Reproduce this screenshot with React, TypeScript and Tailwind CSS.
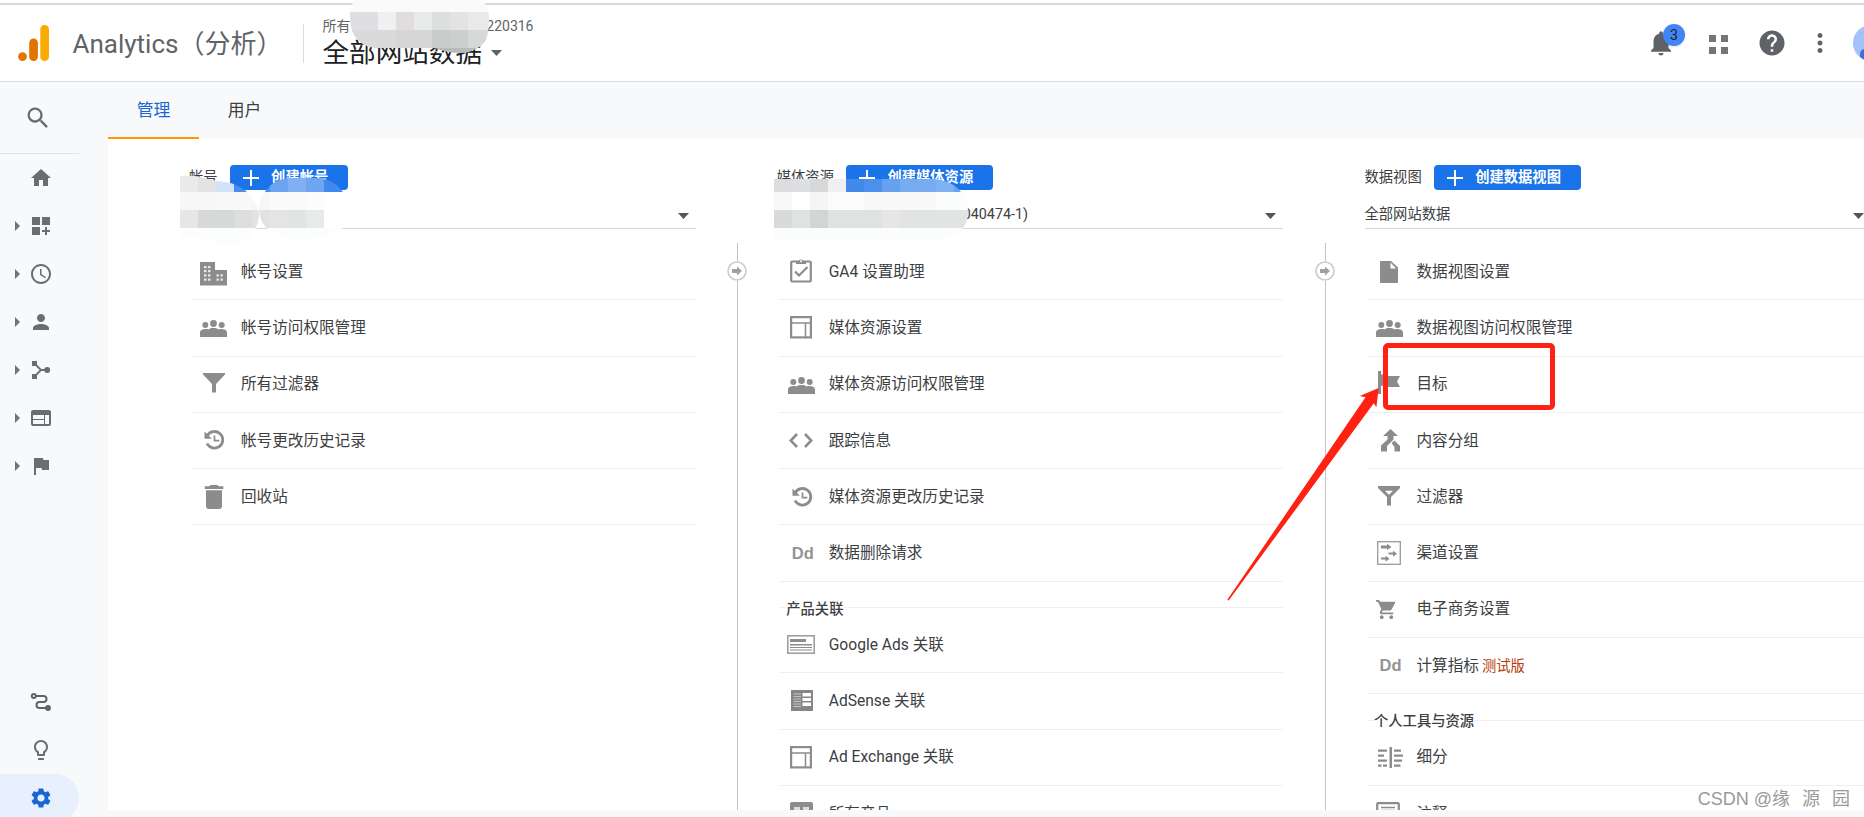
import type { ReactNode } from 'react'
import {
  MdDashboardCustomize,
  MdDelete,
  MdFlag,
  MdHelp,
  MdHome,
  MdLightbulbOutline,
  MdMoreVert,
  MdNotifications,
  MdOutlineAccessTime,
  MdPerson,
  MdSearch,
  MdSettings,
  MdShoppingCart,
  MdWeb,
} from 'react-icons/md'

type Item = { icon: ReactNode; label: string; beta?: string }
type Group = { title?: string; items: Item[] }

/* ---------- list icons ---------- */

const BuildingIcon = () => (
  <svg width="27" height="24" viewBox="0 0 27 24" className="translate-y-[2px]">
    <path fill="#8c8c8c" d="M0 0h15v8h12v15.5H0z" />
    <g fill="#e8e8e8">
      <path d="M4 4h2.5v2.3H4zM8 4h2.5v2.3H8zM4 8h2.5v2.3H4zM8 8h2.5v2.3H8zM4 12.200h2.500v2.300H4zM8 12.200h2.500v2.300H8zM4 16.500h2.500v2.300H4zM8 16.500h2.500v2.300H8z" />
      <path d="M16.500 12.200h2.300v2.300h-2.300zM20.500 12.200h2.300v2.300h-2.300zM16.500 16.500h2.300v2.300h-2.300zM20.500 16.500h2.300v2.300h-2.300z" />
    </g>
  </svg>
)

const PeopleIcon = () => (
  <svg width="27" height="17" viewBox="0 0 27 17" fill="#8c8c8c" className="translate-y-[1px]">
    <circle cx="5.300" cy="5" r="3" />
    <circle cx="13.500" cy="3.500" r="3.400" />
    <circle cx="21.700" cy="5" r="3" />
    <path d="M0 17v-4.500C0 10 3 9 6 9c1 0 1.800.2 2.500.4C9.700 8.500 11.500 8 13.500 8s3.800.5 5 1.400c.7-.2 1.500-.4 2.500-.4 3 0 6 1 6 3.500V17z" />
  </svg>
)

const FilterIcon = () => (
  <svg width="22" height="20" viewBox="0 0 22 20" fill="#8c8c8c" className="-translate-y-px">
    <path d="M0 0h22v1.500L13 11v8.500H9V11L0 1.500z" />
  </svg>
)

const FilterOutlineIcon = () => (
  <svg width="22" height="20" viewBox="0 0 22 20" fill="#8c8c8c" className="-translate-y-px">
    <path fillRule="evenodd" d="M0 0h22v2l-9 9v8.500H9V11L0 2zM7 4.800l4 4 4-4z" />
  </svg>
)

const HistoryIcon = () => (
  <svg width="21" height="20" viewBox="0 0 21 20" fill="none" stroke="#8c8c8c" className="translate-x-px">
    <path strokeWidth="2.800" d="M3.200 5.800A8.300 8.300 0 1 1 3 13.500" />
    <path fill="#8c8c8c" stroke="none" d="M.5 1.500v7.300h7.300z" />
    <path strokeWidth="1.700" d="M10.500 5.500v5.200h4.800" />
  </svg>
)

const TrashIcon = () => <MdDelete size={32} color="#8c8c8c" />

const ClipboardIcon = () => (
  <svg width="22" height="25" viewBox="0 0 22 25" fill="none" stroke="#8c8c8c" className="-translate-y-px">
    <rect x="1.200" y="3.500" width="19.600" height="20" rx="1" strokeWidth="2.200" />
    <path strokeWidth="2.200" d="m5 13.500 4 4 8.500-8.500" />
    <path fill="#8c8c8c" stroke="none" d="M6 3.500h2.300a2.800 2.800 0 0 1 5.400 0H16V6H6z" />
    <circle cx="11" cy="3.200" r="1" fill="#fff" stroke="none" />
  </svg>
)

const LayoutIcon = () => (
  <svg width="22" height="23" viewBox="0 0 22 23" fill="none" stroke="#8c8c8c">
    <rect x="1.100" y="1.100" width="19.800" height="20.300" strokeWidth="2.200" />
    <path strokeWidth="1.500" d="M2 7h18M15.500 7v14" />
  </svg>
)

const CodeIcon = () => (
  <svg width="24" height="15" viewBox="0 0 24 15" fill="none" stroke="#8c8c8c" strokeWidth="2.600">
    <path d="M8 1 1.700 7.500 8 14M16 1l6.300 6.500L16 14" />
  </svg>
)

const DdIcon = () => (
  <span className="pl-[3px] font-['Liberation_Sans',sans-serif] text-[16.5px] font-bold text-[#949494]">Dd</span>
)

const AdsIcon = () => (
  <svg width="28" height="19" viewBox="0 0 28 19">
    <rect x=".8" y=".8" width="26.400" height="17.400" fill="none" stroke="#9a9a9a" strokeWidth="1.500" />
    <path fill="#8c8c8c" d="M3 4h16v3H3zM3 9h22v1.500H3zM3 12h22v1H3zM3 14.500h22v1H3z" />
  </svg>
)

const AdSenseIcon = () => (
  <svg width="22" height="21" viewBox="0 0 22 21" className="translate-x-px">
    <path fill="#868686" d="M0 0h22v21H0z" />
    <path fill="#fff" d="M11.500 3H20v3.500h-8.500zM11.500 8H20v3h-8.500zM11.500 12.500H20V16h-8.500z" />
    <path fill="#c4c4c4" d="M2.500 3.500H10v1H2.500zM2.500 6H10v1H2.500zM2.500 8.500H10v1H2.500zM2.500 11H10v1H2.500zM2.500 13.500H10v1H2.500zM2.500 16H10v1H2.500z" />
  </svg>
)

const ProductsIcon = () => (
  <svg width="23" height="22" viewBox="0 0 23 22">
    <rect width="23" height="22" rx="2" fill="#8c8c8c" />
    <path fill="#ddd" d="M4 5h6v5H4zM13 5h6v5h-6z" />
  </svg>
)

const FileIcon = () => (
  <svg width="18" height="22" viewBox="0 0 18 22" fill="#8c8c8c">
    <path fillRule="evenodd" d="M0 1a1 1 0 0 1 1-1h10l7 6.500V21a1 1 0 0 1-1 1H1a1 1 0 0 1-1-1zM10.500 1.500V7.500H16z" />
  </svg>
)

const GoalIcon = () => (
  <svg width="22" height="23" viewBox="0 0 22 23" fill="#8c8c8c" className="-translate-y-0.5">
    <path d="M0 0h3v3.500C6 3 9 5 12 5h10l-3 5.500 3 5.500H12c-3 0-6-2-9-1v8H0z" />
  </svg>
)

const MergeIcon = () => (
  <svg width="19" height="23" viewBox="0 0 19 23" fill="#8c8c8c" className="translate-x-px">
    <path d="M9.500 0 17 7h-4.500v3.500L6 17v5.500H0V16.500l6.500-6V7H2z" />
    <path d="m10.500 14 3-2.500L19 17v5.500h-5.500V18z" />
  </svg>
)

const ChannelIcon = () => (
  <svg width="24" height="24" viewBox="0 0 24 24" fill="#8c8c8c">
    <rect x=".7" y=".7" width="22.600" height="22.600" fill="none" stroke="#9a9a9a" strokeWidth="1.300" />
    <path d="M4 4.500h6V2.800L14.500 6 10 9V7.500H4zM11.500 11.500H16v-1.800l4 3-4 3V13.500h-4.500zM4 16.500h4.500v-1.800l4 3-4 3V18.500H4z" />
  </svg>
)

const CartIcon = () => <MdShoppingCart size={23} color="#8c8c8c" className="-translate-x-[3px]" />

const SegmentIcon = () => (
  <svg width="25" height="21" viewBox="0 0 25 21" fill="#8c8c8c" className="translate-x-px">
    <path d="M11.500 0H14v21h-2.500zM0 2.500h9v2.300H0zM0 7.500h6v2.300H0zM0 12.500h9v2.300H0zM0 17.500h3.500v2.300H0zM5 17.500h4v2.300H5zM16 2.500h7v2.300h-7zM16 7.500h9v2.300h-9zM16 12.500h8v2.300h-8zM16 17.500h6.500v2.300H16z" />
  </svg>
)

const NoteIcon = () => (
  <svg width="24" height="22" viewBox="0 0 24 22" fill="none" stroke="#8c8c8c" className="-translate-x-px">
    <rect x="1.200" y="1.200" width="21.600" height="19.600" rx="1" strokeWidth="2.200" />
    <path strokeWidth="1.500" d="M5 5.500h14M5 8.500h14" />
  </svg>
)

/* ---------- sidebar icons ---------- */

const BranchIcon = () => (
  <svg width="24" height="24" viewBox="0 0 24 24" fill="currentColor">
    <path d="M3 3h5v5H3zM3 16h5v5H3z" />
    <circle cx="18.200" cy="12" r="3" />
    <path fill="none" stroke="currentColor" strokeWidth="1.800" d="m6 6 6 6-6 6M12 12h5" />
  </svg>
)

const RouteIcon = () => (
  <svg width="24" height="24" viewBox="0 0 24 24" fill="none" stroke="currentColor" strokeWidth="2">
    <circle cx="4.800" cy="6" r="2" />
    <path d="M7 6h7.500a3 3 0 0 1 0 6h-4a3 3 0 0 0 0 6H17" />
    <circle cx="19" cy="18" r="2.900" fill="currentColor" stroke="none" />
  </svg>
)

const navItems = [
  { icon: <MdHome size={24} />, expandable: false },
  { icon: <MdDashboardCustomize size={24} />, expandable: true },
  { icon: <MdOutlineAccessTime size={24} />, expandable: true },
  { icon: <MdPerson size={24} />, expandable: true },
  { icon: <BranchIcon />, expandable: true },
  { icon: <MdWeb size={24} />, expandable: true },
  { icon: <MdFlag size={24} />, expandable: true },
]

const accountGroups: Group[] = [
  {
    items: [
      { icon: <BuildingIcon />, label: '帐号设置' },
      { icon: <PeopleIcon />, label: '帐号访问权限管理' },
      { icon: <FilterIcon />, label: '所有过滤器' },
      { icon: <HistoryIcon />, label: '帐号更改历史记录' },
      { icon: <TrashIcon />, label: '回收站' },
    ],
  },
]

const propertyGroups: Group[] = [
  {
    items: [
      { icon: <ClipboardIcon />, label: 'GA4 设置助理' },
      { icon: <LayoutIcon />, label: '媒体资源设置' },
      { icon: <PeopleIcon />, label: '媒体资源访问权限管理' },
      { icon: <CodeIcon />, label: '跟踪信息' },
      { icon: <HistoryIcon />, label: '媒体资源更改历史记录' },
      { icon: <DdIcon />, label: '数据删除请求' },
    ],
  },
  {
    title: '产品关联',
    items: [
      { icon: <AdsIcon />, label: 'Google Ads 关联' },
      { icon: <AdSenseIcon />, label: 'AdSense 关联' },
      { icon: <LayoutIcon />, label: 'Ad Exchange 关联' },
      { icon: <ProductsIcon />, label: '所有产品' },
    ],
  },
]

const viewGroups: Group[] = [
  {
    items: [
      { icon: <FileIcon />, label: '数据视图设置' },
      { icon: <PeopleIcon />, label: '数据视图访问权限管理' },
      { icon: <GoalIcon />, label: '目标' },
      { icon: <MergeIcon />, label: '内容分组' },
      { icon: <FilterOutlineIcon />, label: '过滤器' },
      { icon: <ChannelIcon />, label: '渠道设置' },
      { icon: <CartIcon />, label: '电子商务设置' },
      { icon: <DdIcon />, label: '计算指标', beta: '测试版' },
    ],
  },
  {
    title: '个人工具与资源',
    items: [
      { icon: <SegmentIcon />, label: '细分' },
      { icon: <NoteIcon />, label: '注释' },
    ],
  },
]

function Caret({ className = '' }: { className?: string }) {
  return (
    <svg width="11" height="6" viewBox="0 0 11 6" className={className}>
      <path fill="currentColor" d="M0 0h11L5.500 6z" />
    </svg>
  )
}

type ColumnProps = { label: string; action: string; selected: ReactNode; groups: Group[] }

function Column({ label, action, selected, groups }: ColumnProps) {
  return (
    <section className="w-[506.500px] shrink-0 pt-[26px]">
      <div className="flex h-[25px] items-center text-[14.3px]">
        <span className="whitespace-nowrap text-[#3c4043]">{label}</span>
        <button className="ml-[12.500px] flex h-[25px] items-center rounded bg-[#1a73e8] pr-5 pl-[13px] font-bold text-white">
          <svg width="16" height="16" viewBox="0 0 16 16" className="mr-3">
            <path stroke="#fff" strokeWidth="2" d="M8 0v16M0 8h16" />
          </svg>
          <span className="whitespace-nowrap">{action}</span>
        </button>
      </div>
      <div className="flex h-[39px] items-center justify-between border-b border-[#d5d7da] pr-[7px] pt-[12px] text-[14.3px] text-[#3c4043]">
        <span>{selected}</span>
        <Caret className="mt-px text-[#555]" />
      </div>

      <div className="mt-[15px] ml-[2.500px]">
        {groups.map((group, i) => (
          <div key={i}>
            {group.title && (
              <div className="flex h-[35.500px] items-center pt-[17px]">
                <div className="w-[7px] border-t border-[#f0f0f0]" />
                <h3 className="pt-0.5 text-[14.3px] font-medium leading-none text-[#3c4043]">{group.title}</h3>
                <div className="flex-1 border-t border-[#f0f0f0]" />
              </div>
            )}
            {group.items.map((item) => (
              <div key={item.label} className="flex h-[56.250px] items-center border-b border-[#efefef]">
                <div className="flex w-[44px] shrink-0 justify-center">{item.icon}</div>
                <span className="ml-[5.500px] whitespace-nowrap pt-[2px] text-[15.6px] text-[#3c4043]">{item.label}</span>
                {item.beta && <span className="ml-[3px] pt-[3px] text-[14.3px] text-[#b3400a]">{item.beta}</span>}
              </div>
            ))}
          </div>
        ))}
      </div>
    </section>
  )
}

function ColumnDivider() {
  return (
    <div className="flex w-[81.250px] shrink-0 flex-col items-center pt-[104px] pl-[3px]">
      <div className="h-[18px] w-px bg-[#c4c4c4]" />
      <svg width="20" height="20" viewBox="0 0 20 20" className="-ml-px shrink-0">
        <circle cx="10" cy="10" r="9" fill="#fff" stroke="#cbcbcb" strokeWidth="1.600" />
        <path fill="#a0a0a0" d="M5 8h5V5.500L15 10l-5 4.500V12H5z" />
      </svg>
      <div className="w-px flex-1 bg-[#c4c4c4]" />
    </div>
  )
}

/* Pixel mosaic covering account names */
function Mosaic() {
  const header = [
    [350, 12, 28, '#dfdfe1'], [378, 12, 18, '#f0f0f3'], [396, 12, 18, '#e1dddf'], [414, 12, 18, '#e9ebea'],
    [432, 12, 18, '#dddede'], [450, 12, 18, '#e3e3e3'], [468, 12, 21, '#ebe8e9'],
    [350, 30, 46, '#dadadb'], [396, 30, 36, '#d6d6d7'], [432, 30, 18, '#c9cbca'], [450, 30, 18, '#cdcfce'], [468, 30, 21, '#d7d8d8'],
    [396, 48, 93, '#b9babb'],
  ] as const
  const account = [
    [180, 174, 18, '#e9ebea'], [198, 174, 18, '#e2e3e2'], [216, 174, 18, '#d2e2fa'], [234, 174, 36, '#488dec'],
    [270, 174, 18, '#6ba3f1'], [288, 174, 18, '#80b0f2'], [306, 174, 18, '#6fa6f1'], [324, 174, 20, '#4289ec'],
    [180, 192, 36, '#f7f7f7'], [216, 192, 36, '#f9f9f9'], [252, 192, 18, '#f7f7f7'], [270, 192, 36, '#fafafa'], [306, 192, 18, '#fcfcfc'], [324, 192, 20, '#fefefe'],
    [180, 210, 18, '#e6e6e6'], [198, 210, 36, '#d7d9d8'], [234, 210, 18, '#dcdfde'], [252, 210, 18, '#e2e2e2'],
    [270, 210, 18, '#e4e4e4'], [288, 210, 18, '#e2e4e3'], [306, 210, 18, '#e8eae9'], [324, 210, 20, '#ffffff'],
    [180, 228, 164, '#fcfdfd'],
  ] as const
  const property = [
    [774, 174, 18, '#dcdcde'], [792, 174, 18, '#dedfe0'], [810, 174, 18, '#d8d8da'], [828, 174, 18, '#f0f0f0'],
    [846, 174, 18, '#4389ea'], [864, 174, 18, '#4a90ec'], [882, 174, 18, '#65a1ef'], [900, 174, 36, '#78acf1'], [936, 174, 18, '#80b2f3'], [954, 174, 18, '#6aa2ef'],
    [774, 192, 18, '#f8f8f8'], [792, 192, 18, '#fefefe'], [810, 192, 18, '#f4f6f5'], [828, 192, 36, '#fbfbfb'], [864, 192, 72, '#f9f9f9'], [936, 192, 36, '#fbfcfc'],
    [774, 210, 18, '#d9dadc'], [792, 210, 18, '#e0e2e1'], [810, 210, 18, '#d3d4d6'], [828, 210, 54, '#e0e2e1'], [882, 210, 18, '#e6e6e6'], [900, 210, 72, '#e2e4e3'],
    [774, 228, 198, '#fbfdfc'],
  ] as const

  const cells = (list: readonly (readonly [number, number, number, string])[]) =>
    list.map(([x, y, w, fill]) => <rect key={`${x}-${y}`} x={x} y={y} width={w} height="18" fill={fill} />)

  return (
    <>
      <clipPath id="mosaic-header">
        <path d="M355 0h127c4 5 7 10 7 18 0 10-1 17-4 24-6 6-14 11-24 11s-18-2-26-5h-60c-16-2-25-13-25-31 0-7 1-12 5-17z" />
      </clipPath>
      <clipPath id="mosaic-account">
        <path d="M180 176h14c8 1 15 3 22 5 20 1 30 8 37 18 4 6 6 11 6 17-2 14-10 30-31 30-10 0-20-7-30-9h-18z" />
        <path d="M259 209c2-17 13-31 33-31h26c12 1 20 7 25 14v36c-12 8-26 11-43 11-22 0-41-10-41-30z" />
      </clipPath>
      <clipPath id="mosaic-property">
        <path d="M774 179h160c22 2 34 16 34 33 0 16-12 27-30 28H774z" />
      </clipPath>
      <g clipPath="url(#mosaic-header)" shapeRendering="crispEdges">
        <path fill="#fafafa" d="M350 0h139v12H350z" />
        {cells(header)}
      </g>
      <g clipPath="url(#mosaic-account)" shapeRendering="crispEdges">{cells(account)}</g>
      <g clipPath="url(#mosaic-property)" shapeRendering="crispEdges">{cells(property)}</g>
    </>
  )
}

export default function App() {
  return (
    <div className="relative flex h-[817px] w-full flex-col overflow-hidden bg-[#f8f9fb] font-[Roboto,'Noto_Sans_CJK_SC',sans-serif] text-[#3c4043]">
      <div className="h-[5px] shrink-0 border-b-2 border-[#dadada] bg-white" />

      {/* top bar */}
      <header className="flex h-[77px] shrink-0 items-center border-b border-[#dadce0] bg-white">
        <svg width="31" height="36" viewBox="0 0 31 36" className="ml-[18px]">
          <rect x="22.300" width="8.700" height="36" rx="4.350" fill="#f9ab00" />
          <rect x="11.200" y="13.500" width="8.700" height="22.500" rx="4.350" fill="#e37400" />
          <circle cx="4.500" cy="31.600" r="4.400" fill="#e37400" />
        </svg>
        <div className="ml-[23.500px] w-[230.500px] whitespace-nowrap pt-[3px] text-[26px] text-[#5f6368]">Analytics（分析）</div>
        <div className="h-[39px] w-px bg-[#dadce0]" />
        <div className="ml-[18.500px] w-[220px] whitespace-nowrap">
          <div className="flex justify-between pr-[9px] text-[14px] leading-[19px] text-[#5f6368]">
            <span>所有</span>
            <span>220316</span>
          </div>
          <div className="flex items-center text-[26.6px] leading-[33px] text-[#202124]">
            全部网站数据
            <Caret className="ml-[9px] text-[#5f6368]" />
          </div>
        </div>

        <div className="ml-auto flex shrink-0 items-center text-[#5f6368]">
          <div className="relative">
            <MdNotifications size={30} />
            <span className="absolute -top-[4px] left-[17px] flex size-[22px] items-center justify-center rounded-full bg-[#4285f4] text-[14px] text-[#202124] shadow">
              3
            </span>
          </div>
          <div className="ml-[33px] grid grid-cols-2 gap-[5px] pt-[3px]">
            {[0, 1, 2, 3].map((n) => (
              <span key={n} className="size-[7px] bg-[#757575]" />
            ))}
          </div>
          <MdHelp size={30} className="ml-[28.500px]" />
          <MdMoreVert size={30} className="ml-[18px]" />
          <svg width="11" height="36" viewBox="0 0 11 36" className="ml-[18.500px]">
            <circle cx="18" cy="18" r="18" fill="#a4c2fa" />
            <path fill="#3f70d8" d="M11 24c-3 1-4.500 3-4 8l4.500 3z" />
          </svg>
        </div>
      </header>

      <div className="flex min-h-0 flex-1">
        {/* sidebar */}
        <nav className="flex w-[108px] shrink-0 flex-col text-[#6b6d70]">
          <div className="flex h-[72px] w-[79px] shrink-0 items-center border-b border-[#e0e2e5] pl-6 text-[#696b6e]">
            <MdSearch size={28} />
          </div>
          {navItems.map((item, i) => (
            <div key={i} className="flex h-12 w-[79px] shrink-0 items-center">
              <svg width="5" height="10" viewBox="0 0 5 10" className="ml-[15px]">
                {item.expandable && <path fill="#757575" d="M0 0l5 5-5 5z" />}
              </svg>
              <span className="ml-[9px]">{item.icon}</span>
            </div>
          ))}
          <div className="mt-[188px] flex h-12 shrink-0 items-center pl-[29px] text-[#5f6368]">
            <RouteIcon />
          </div>
          <div className="flex h-12 shrink-0 items-center pl-[29px]">
            <MdLightbulbOutline size={24} />
          </div>
          <div className="flex h-12 w-[79px] shrink-0 items-center rounded-r-full bg-[#e8f0fe] pl-[29px] text-[#1967d2]">
            <MdSettings size={24} />
          </div>
        </nav>

        <main className="flex min-w-0 flex-1 flex-col overflow-hidden">
          <div className="flex h-[57px] shrink-0 text-[16.8px]">
            <div className="flex w-[91px] items-center justify-center border-b-2 border-[#ff9800] pt-0.5 text-[#1967d2]">管理</div>
            <div className="flex w-[91px] items-center justify-center">用户</div>
          </div>
          <div className="flex h-[671px] overflow-hidden bg-white pl-[81px]">
            <Column label="帐号" action="创建帐号" selected={<>&nbsp;</>} groups={accountGroups} />
            <ColumnDivider />
            <Column
              label="媒体资源"
              action="创建媒体资源"
              selected={<span className="pl-[186px]">040474-1)</span>}
              groups={propertyGroups}
            />
            <ColumnDivider />
            <Column label="数据视图" action="创建数据视图" selected="全部网站数据" groups={viewGroups} />
          </div>
        </main>
      </div>

      {/* annotations drawn over the page */}
      <svg width="1864" height="817" viewBox="0 0 1864 817" className="pointer-events-none absolute top-0 left-0">
        <Mosaic />
        <rect x="1385.500" y="345.500" width="167" height="62" rx="2.500" fill="none" stroke="#ff2112" strokeWidth="5" />
        <path fill="#ff2112" d="M1378.700 388 1359.700 396l5.800 1.200L1227.500 599.500l1 1.200L1373.800 403.300l2.600 3.900z" />
      </svg>
      <div className="absolute right-[14px] bottom-[4px] flex items-center font-['Liberation_Sans','Noto_Sans_CJK_SC',sans-serif] text-[18px] text-[#9a9a9a]">
        <span>CSDN @缘</span>
        <span className="ml-[12px]">源</span>
        <span className="ml-[12px]">园</span>
      </div>
    </div>
  )
}
